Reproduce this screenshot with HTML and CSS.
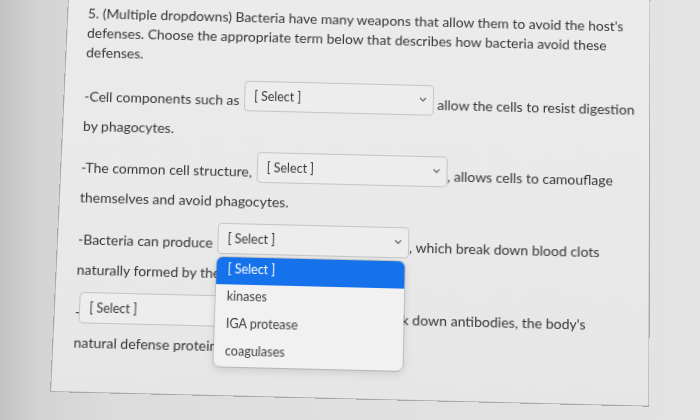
FILE: index.html
```html
<!DOCTYPE html>
<html lang="en">
<head>
<meta charset="utf-8">
<title>Question 5</title>
<link rel="stylesheet" href="styles.css">
</head>
<body>
<div class="page">
  <div class="card">
    <p class="intro">5. (Multiple dropdowns) Bacteria have many weapons that allow them to avoid the host's<br>defenses. Choose the appropriate term below that describes how bacteria avoid these<br>defenses.</p>
    <p>-Cell components such as <span class="sel"><span class="lbl">[ Select ]</span><svg class="chev" width="8" height="6" viewBox="0 0 8 6"><path d="M1 1.2l3 3 3-3" /></svg></span> allow the cells to resist digestion<br>by phagocytes.</p>
    <p>-The common cell structure, <span class="sel"><span class="lbl">[ Select ]</span><svg class="chev" width="8" height="6" viewBox="0 0 8 6"><path d="M1 1.2l3 3 3-3" /></svg></span>, allows cells to camouflage<br>themselves and avoid phagocytes.</p>
    <p>-Bacteria can produce <span class="sel open"><span class="lbl">[ Select ]</span><svg class="chev" width="8" height="6" viewBox="0 0 8 6"><path d="M1 1.2l3 3 3-3" /></svg>
      <span class="menu">
        <span class="opt active">[ Select ]</span>
        <span class="opt">kinases</span>
        <span class="opt">IGA protease</span>
        <span class="opt">coagulases</span>
      </span></span>, which break down blood clots<br>naturally formed by the body.</p>
    <p>-<span class="sel wide"><span class="lbl">[ Select ]</span><svg class="chev" width="8" height="6" viewBox="0 0 8 6"><path d="M1 1.2l3 3 3-3" /></svg></span>, which break down antibodies, the body's<br>natural defense proteins.</p>
  </div>
</div>
</body>
</html>
```
FILE: styles.css
```css
html, body {
  margin: 0;
  height: 100%;
  overflow: hidden;
}
body {
  background: linear-gradient(90deg, #c3c3c3 0, #d3d3d3 40px, #dcdcdc 110px, #e1e1e1 60%, #e3e3e3 100%);
  font-family: "Lato", "Liberation Sans", sans-serif;
}
.page {
  display: flow-root;
  height: 420px;
  padding-left: 59px;
}
.card {
  width: 591px;
  margin-top: -20px;
  box-sizing: border-box;
  border: 1px solid #a9a9a9;
  background: linear-gradient(180deg, #ebebeb 0, #e9e9e9 60%, #e6e6e6 100%);
  padding: 26.3px 8px 38.4px 20px;
  color: #34373a;
  font-size: 14px;
  line-height: 20px;
  white-space: nowrap;
  transform-origin: 291px 220px;
  transform: rotate(1.4deg) perspective(1000px) rotateX(4.1deg);
}
p {
  margin: 0 0 12px;
}
p:last-child {
  margin-bottom: 0;
}
.intro {
  margin-bottom: 14.3px;
}
.sel {
  display: inline-flex;
  align-items: center;
  position: relative;
  box-sizing: border-box;
  width: 191px;
  height: 31px;
  margin: 0 0 9px 1px;
  padding: 0 6px 0 9px;
  border: 1px solid #c4c4c4;
  border-radius: 4px;
  background: #ededed;
  vertical-align: 5px;
  font-size: 12.5px;
  line-height: 29px;
  color: #34373a;
}
.sel.wide {
  width: 246px;
  margin-left: -1px;
}
.lbl {
  flex: 1;
}
.chev path {
  fill: none;
  stroke: #555a5e;
  stroke-width: 1.2;
}
.menu {
  position: absolute;
  left: -1px;
  top: calc(100% + 4px);
  width: 187px;
  display: flex;
  flex-direction: column;
  background: #f1f1f1;
  border-radius: 6px;
  box-shadow: 0 0 0 1px rgba(0, 0, 0, 0.13), 0 3px 8px rgba(0, 0, 0, 0.12);
  z-index: 2;
}
.opt {
  box-sizing: border-box;
  height: 27px;
  padding: 0 11px;
  line-height: 24px;
  font-size: 12.5px;
  color: #3f4245;
}
.opt.active {
  background: #1672ea;
  color: #ffffff;
  border-radius: 6px 6px 0 0;
}
```
